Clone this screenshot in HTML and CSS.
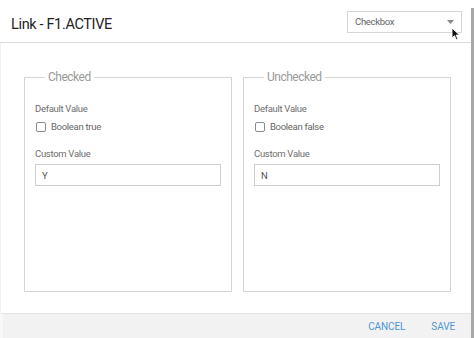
FILE: index.html
```html
<!DOCTYPE html>
<html>
<head>
<meta charset="utf-8">
<link rel="stylesheet" href="styles.css">
</head>
<body>
<div class="dialog">
  <header class="head">
    <h1 class="title">Link - F1.ACTIVE</h1>
    <div class="select">
      <span>Checkbox</span>
      <svg class="caret" width="7" height="4" viewBox="0 0 7 4"><path d="M0 0h7L3.5 4z" fill="#8a8a8a"/></svg>
    </div>
  </header>
  <main class="body">
    <fieldset class="group">
      <legend>Checked</legend>
      <div class="label">Default Value</div>
      <label class="check"><span class="box"></span>Boolean true</label>
      <div class="label">Custom Value</div>
      <div class="input">Y</div>
    </fieldset>
    <fieldset class="group">
      <legend>Unchecked</legend>
      <div class="label">Default Value</div>
      <label class="check"><span class="box"></span>Boolean false</label>
      <div class="label">Custom Value</div>
      <div class="input">N</div>
    </fieldset>
  </main>
  <footer class="foot">
    <span class="btn">CANCEL</span>
    <span class="btn">SAVE</span>
  </footer>
  <div class="edge"></div>
  <svg class="cursor" width="10" height="14" viewBox="0 0 10 14"><path d="M1 1v10l2.5-2.3 1.8 4 1.6-.7-1.8-3.9H8.5z" fill="#111" stroke="#fff" stroke-width="0.9"/></svg>
</div>
</body>
</html>
```
FILE: styles.css
```css
* { box-sizing: border-box; }
html, body { margin: 0; padding: 0; background: #fff; }
body { font-family: Roboto, "Noto Sans", sans-serif; width: 474px; height: 338px; overflow: hidden; }
.dialog { position: relative; width: 474px; height: 338px; display: flex; flex-direction: column; }
.head { height: 43px; border-bottom: 1px solid #dcdcdc; display: flex; align-items: center; justify-content: space-between; padding: 0 12px 0 11px; }
.title { margin: 0; font-size: 14.5px; font-weight: 400; color: #222; letter-spacing: -0.35px; padding-top: 6px; }
.select { width: 115px; height: 22px; border: 1px solid #d6d6d6; display: flex; align-items: center; justify-content: space-between; padding: 0 7px 0 7px; font-size: 9.5px; letter-spacing: -0.3px; color: #666; margin-top: 1px; }
.caret { margin-top: 1px; }
.body { flex: 1; display: grid; grid-template-columns: 1fr 1fr; gap: 11px; padding: 27px 23px 21px 23px; border-left: 1px solid #f0f0f0; }
.group { margin: 0; border: 1px solid #d4d4d4; padding: 17px 10px 0 10px; min-width: 0; }
.group legend { font-size: 12px; letter-spacing: -0.5px; color: #9a9a9a; padding: 0 3px; margin-left: 10px; line-height: 15px; }
.label { font-size: 9.5px; letter-spacing: -0.3px; color: #6e6e6e; line-height: 13px; }
.check { display: flex; align-items: center; font-size: 9.5px; letter-spacing: -0.3px; color: #666; margin: 5px 0 0 1px; height: 13px; }
.box { width: 10px; height: 10px; border: 1px solid #8a8a8a; border-radius: 2px; margin-right: 5px; }
.check + .label { margin-top: 14px; }
.input { margin-top: 4px; height: 22px; border: 1px solid #cfcfcf; font-size: 9.5px; color: #555; padding: 0 6px; display: flex; align-items: center; }
.foot { height: 25px; background: #f2f2f2; border-top: 1px solid #e2e2e2; border-left: 3px solid #f8f8f8; display: flex; justify-content: flex-end; align-items: center; gap: 26px; padding-right: 19px; }
.btn { font-size: 10px; color: #4e95d6; letter-spacing: -0.1px; }
.edge { position: absolute; right: 0; top: 8px; bottom: 0; width: 3px; background: #a8a8a8; }
.cursor { position: absolute; left: 451px; top: 27px; }
```
